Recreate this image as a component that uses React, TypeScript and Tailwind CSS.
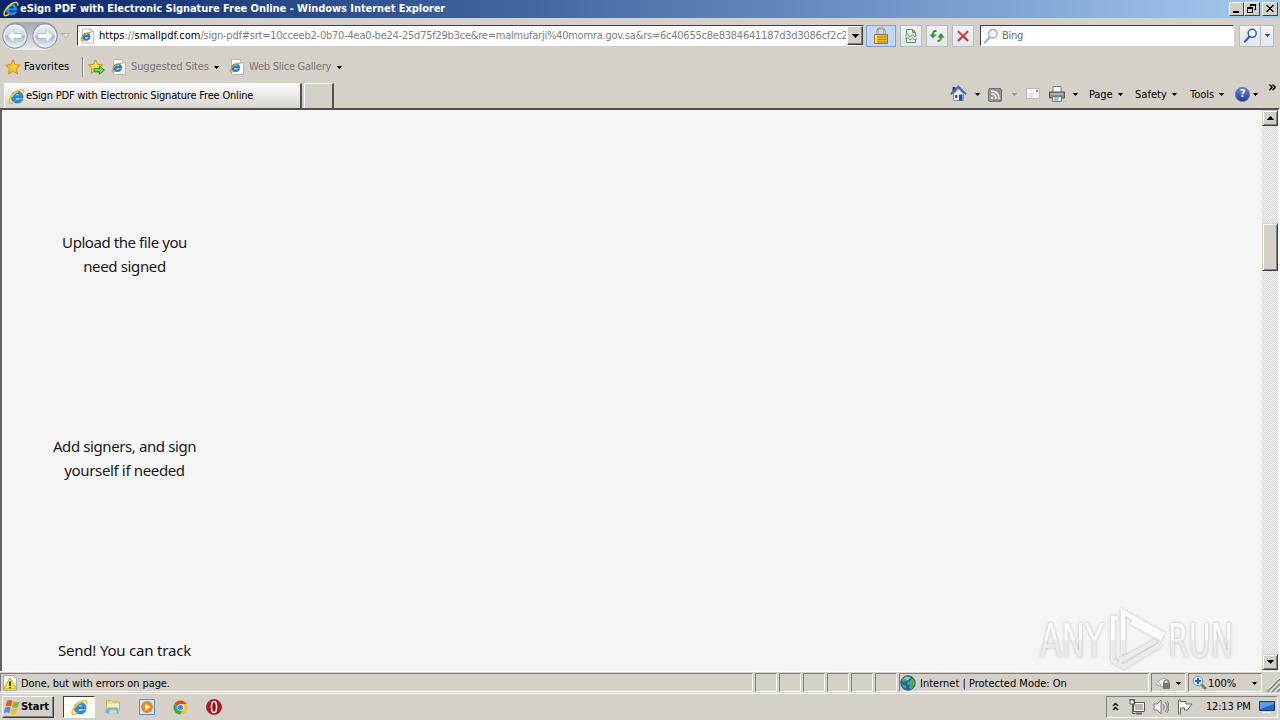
import type { ReactNode } from 'react'

const STATUS_PANES = [1, 2, 3, 4, 5, 6]

const STEPS = [
  { lines: ['Upload the file you', 'need signed'], tracking: ['tracking-[-0.43px]', 'tracking-[-0.35px]'] },
  { lines: ['Add signers, and sign', 'yourself if needed'], tracking: ['tracking-[-0.4px]', 'tracking-[-0.35px]'] },
  { lines: ['Send! You can track'], tracking: ['tracking-[-0.2px]'] },
]

function IeLogo({ className }: { className: string }) {
  return (
    <svg viewBox="0 0 16 16" className={className}>
      <path d="M14.200 9.400H6.600c.1 1.300 1 2 2.200 2 .9 0 1.600-.3 2-.9h3.200c-.8 2.200-2.700 3.700-5.300 3.700-3.300 0-5.500-2.300-5.500-5.500 0-3.200 2.400-5.700 5.700-5.700 3.400 0 5.500 2.600 5.300 6.400zM6.700 7.200h4.200c-.2-1-.9-1.600-2-1.600-1.100 0-1.900.6-2.200 1.600z" fill="#2a8ee2" stroke="#15569c" strokeWidth=".5" />
      <path d="M4.300 8C4.500 5.500 6.500 3.900 9 4" fill="none" stroke="#8fdcff" strokeWidth="1.200" />
      <path d="M14.600 4.700C15.500 1.300 13 .3 8.800 2.800 4 5.800.200 11.500 1.200 13.800c.7 1.400 3.200.6 5-.7" fill="none" stroke="#f0c02c" strokeWidth="1.600" />
    </svg>
  )
}

function IePage({ className }: { className: string }) {
  return (
    <svg viewBox="0 0 16 16" className={className}>
      <path d="M2.500.5h9l3 3v12h-12z" fill="#fff" stroke="#b5b5b5" />
      <path d="M11.500.5v3h3" fill="#ddd" stroke="#b5b5b5" />
      <path d="M10.800 9H4.600c.2 2.600 3.400 2.800 4.200 1h1.700c-1.600 4-7.900 3.200-7.900-1.200 0-5 8.400-5.300 8.200.2zM4.800 7.500h4C8.500 5.400 5.300 5.400 4.800 7.500z" fill="#2076c8" stroke="#2076c8" strokeWidth=".9" />
      <path d="M11.300 5C11 2 2 7 1.200 11.500c-.3 2.200 1.800 1.700 3.300.7" fill="none" stroke="#c9a92c" strokeWidth="1.200" />
    </svg>
  )
}

function Caret({ className = '', color = '#000' }: { className?: string; color?: string }) {
  return (
    <svg viewBox="0 0 6 3" className={`h-[3px] w-1.5 flex-shrink-0 ${className}`} shapeRendering="crispEdges">
      <path d="M0 0h6L3 3z" fill={color} />
    </svg>
  )
}

function Star({ className }: { className: string }) {
  return (
    <svg viewBox="0 0 16 16" className={className}>
      <path d="M8 .8l2.200 4.800 5.100.6-3.800 3.500 1 5.200L8 12.300l-4.500 2.600 1-5.200L.7 6.200l5.100-.6z" fill="#ffc32b" stroke="#d88713" />
      <path d="M8 3l1.400 3.400 3.300.5-3 1.600L8 8z" fill="#ffec8f" />
    </svg>
  )
}

function ArrowButton({ flip, className }: { flip?: boolean; className: string }) {
  return (
    <svg viewBox="0 0 26 26" className={className}>
      <defs>
        <linearGradient id="orb" x1="0" y1="0" x2="0" y2="1">
          <stop offset="0" stopColor="#f4f6fa" />
          <stop offset=".45" stopColor="#cdd7e4" />
          <stop offset=".5" stopColor="#a9bbd2" />
          <stop offset="1" stopColor="#eaf6ff" />
        </linearGradient>
      </defs>
      <circle cx="13" cy="13" r="12" fill="url(#orb)" stroke="#8b95a5" strokeWidth="1.300" />
      <circle cx="13" cy="13" r="10.800" fill="none" stroke="#f4f7fb" strokeWidth="1.300" />
      <g transform={flip ? 'translate(26 0) scale(-1 1)' : undefined}>
        <path d="M5.500 13L12 6.500v4h8v5h-8v4z" fill="#fff" stroke="#9fb0c6" strokeWidth=".7" />
      </g>
    </svg>
  )
}

function ToolButton({ children, className }: { children: ReactNode; className: string }) {
  return (
    <div className={`flex h-[22px] flex-shrink-0 items-center justify-center border border-[#b5bdc9] bg-gradient-to-b from-[#f3f3f3] to-[#e3e6eb] ${className}`}>
      {children}
    </div>
  )
}

function Magnifier({ className, color }: { className: string; color: string }) {
  return (
    <svg viewBox="0 0 16 16" className={className}>
      <path d="M7 9l-5 5.500" stroke={color} strokeWidth="2.200" strokeLinecap="round" />
      <circle cx="9.800" cy="5.700" r="4.300" fill="#f2f8ff" stroke={color} strokeWidth="1.500" />
    </svg>
  )
}

function TitleBar() {
  return (
    <header className="flex h-[18px] items-center bg-gradient-to-r from-[#0a246a] to-[#a6caf0] pl-[3px] pr-0.5">
      <IeLogo className="h-4 w-4" />
      <span className="ml-px w-[440px] whitespace-nowrap text-[11px] font-bold tracking-[-0.06px] text-white">
        eSign PDF with Electronic Signature Free Online - Windows Internet Explorer
      </span>
      <div className="ml-auto flex">
        {['min', 'restore', 'close'].map((kind) => (
          <div
            key={kind}
            className={`h-3.5 border border-b-[#404040] border-l-white border-r-[#404040] border-t-white bg-[#d4d0c8] ${kind === 'close' ? 'ml-0.5 w-4' : kind === 'min' ? 'w-[15px]' : 'w-4'}`}
          >
            <svg viewBox="0 0 14 12" className="h-3 w-3.5" fill="none" stroke="#000" shapeRendering="crispEdges">
              {kind === 'min' && <path d="M3 9h6" strokeWidth="2" />}
              {kind === 'restore' && <path d="M5.500 4V1.500h5v5H9M5 2h6M2.500 4.500h5v5h-5zM2 5h6" />}
              {kind === 'close' && <path d="M3 2l7 7M10 2L3 9M4 2l7 7M11 2L4 9" />}
            </svg>
          </div>
        ))}
      </div>
    </header>
  )
}

function NavBar() {
  return (
    <div className="flex h-[35px] items-center">
      <div className="ml-0.5 flex h-7 w-14 items-center justify-between rounded-full bg-gradient-to-b from-[#a5a6b0] to-[#eeeeee]">
        <ArrowButton className="h-[26px] w-[26px]" />
        <ArrowButton flip className="h-[26px] w-[26px]" />
      </div>
      <svg viewBox="0 0 9 6" className="ml-[3px] h-1.5 w-[9px]">
        <path d="M.5.500h8L4.500 5z" fill="#ddd" stroke="#aaa6a0" strokeWidth=".8" />
      </svg>

      {/* Address field */}
      <div className="ml-[7px] flex h-[21px] w-[787px] items-center border border-b-white border-l-[#404040] border-r-[#d4d0c8] border-t-[#404040] bg-white">
        <IePage className="ml-0.5 h-4 w-[15px] flex-shrink-0" />
        <div className="ml-1 mt-0.5 w-[747px] flex-shrink-0 overflow-hidden whitespace-nowrap text-[11px] text-[#808080]">
          <span>
            <span className="text-black">https</span>://<span className="text-black">smallpdf.com</span>
          </span>
          <span className="tracking-[-0.235px]">/sign-pdf#srt=10cceeb2-0b70-4ea0-be24-25d75f29b3ce&amp;re=malmufarji%40momra.gov.sa&amp;rs=6c40655c8e8384641187d3d3086cf2c2</span>
        </div>
        <div className="ml-px flex h-[19px] w-4 flex-shrink-0 items-center justify-center border border-b-[#404040] border-l-white border-r-[#404040] border-t-white bg-[#d4d0c8] shadow-[inset_-1px_-1px_#808080]">
          <svg viewBox="0 0 8 4" className="h-1 w-2" shapeRendering="crispEdges"><path d="M0 0h8L4 4z" /></svg>
        </div>
      </div>

      <div className="ml-0.5 flex h-[22px] w-[30px] items-center justify-center border border-[#7da2d6] bg-[#bfd8fb]">
        <svg viewBox="0 0 16 18" className="h-[18px] w-4">
          <path d="M4.500 9V4.500C4.500.500 11.500.500 11.500 4.500V9" fill="none" stroke="#a28a60" strokeWidth="2.200" />
          <path d="M4.500 9V4.500C4.500 1 11.500 1 11.500 4.500V9" fill="none" stroke="#e7dcc0" strokeWidth=".8" />
          <path d="M1.500 7.500h13v9h-13z" fill="#edb625" stroke="#a6731a" />
          <path d="M2 10h12M2 12.500h12M2 15h12" stroke="#bd851b" />
          <path d="M3 8v8" stroke="#ffe580" strokeWidth="2" />
        </svg>
      </div>
      <ToolButton className="ml-1 w-[22px]">
        <svg viewBox="0 0 16 16" className="h-4 w-4" fill="none" stroke="#48a34b">
          <path d="M3.500 6V1.500h6l3 3V7M9.500 1.500v3h3M3.500 10v4.500h9V11" />
          <path d="M2 8l2.500-2L7 9l2.500-2L12 9l2-1.500M2 11l2.500-2L7 12l2.500-2 2.500 2 2-1.500" />
        </svg>
      </ToolButton>
      <ToolButton className="ml-1 w-[22px]">
        <svg viewBox="0 0 16 16" className="h-4 w-4" fill="none" stroke="#2f9735" strokeWidth="2">
          <path d="M7.500 3C5 2.500 4 3.500 4 7M8.500 13c2.500 0 3.500-1 3.500-5" />
          <path d="M.5 6.500h7L4 10.500zM8.500 9.500h7L12 5z" fill="#2f9735" stroke="none" />
        </svg>
      </ToolButton>
      <ToolButton className="ml-1 w-[22px]">
        <svg viewBox="0 0 16 16" className="h-4 w-4" stroke="#c23a47" strokeWidth="2.200">
          <path d="M3 3l10 10M13 3L3 13" />
          <path d="M4 3l4 4 4-4" fill="none" stroke="#ec8a8f" strokeWidth=".8" />
        </svg>
      </ToolButton>

      <div className="ml-1.5 flex h-[21px] w-[254px] items-center border border-b-white border-l-[#404040] border-r-white border-t-[#404040] bg-white text-[11px] text-[#6d6d6d]">
        <Magnifier className="ml-0.5 h-4 w-4" color="#a0afc0" />
        <span className="ml-[3px] mt-0.5 tracking-[-0.3px]">Bing</span>
      </div>
      <ToolButton className="ml-[5px] w-[22px]">
        <Magnifier className="h-[15px] w-[15px]" color="#2759be" />
      </ToolButton>
      <ToolButton className="-ml-px w-[14px]">
        <Caret color="#2a57a5" />
      </ToolButton>
    </div>
  )
}

function FavoritesBar() {
  return (
    <div className="flex h-7 items-center text-[11px] text-[#777]">
      <Star className="ml-[5px] h-4 w-4" />
      <span className="ml-[3px] w-[58px] whitespace-nowrap tracking-[0.08px] text-black">Favorites</span>
      <div className="h-5 w-0.5 border-l border-r border-l-[#808080] border-r-white" />
      <svg viewBox="0 0 17 16" className="ml-1 h-4 w-[17px]">
        <path d="M7.500.8l2 4.500 5 .5-3.800 3.400 1 5.200-4.200-2.600-4.500 2.600 1-5.200L.5 5.800l5-.5z" fill="#ffdf45" stroke="#b89625" />
        <path d="M6 9.500h5.500V7l4.800 4.200-4.800 4v-2.500H6z" fill="#6ddc47" stroke="#239225" />
      </svg>
      <IePage className="ml-1.5 h-4 w-4" />
      <span className="ml-1 mt-px w-[82px] whitespace-nowrap tracking-[-0.15px]">Suggested Sites</span>
      <Caret />
      <IePage className="ml-2.5 h-4 w-4" />
      <span className="ml-1 mt-px w-[87px] whitespace-nowrap tracking-[-0.25px]">Web Slice Gallery</span>
      <Caret />
    </div>
  )
}

function TabRow() {
  return (
    <div className="flex h-[27px] items-end text-[11px] text-black">
      <div className="ml-1 flex h-[25px] w-[298px] items-center border-l border-r-2 border-t border-l-white border-r-[#505050] border-t-white bg-gradient-to-b from-[#fcfcfb] to-[#d9d5ce] pl-[3px]">
        <IeLogo className="h-[17px] w-[17px]" />
        <span className="ml-px mt-px whitespace-nowrap tracking-[-0.19px]">eSign PDF with Electronic Signature Free Online</span>
      </div>
      <div className="ml-0.5 h-[25px] w-[30px] border-l border-r-2 border-t border-l-white border-r-[#505050] border-t-white" />

      {/* Command bar */}
      <div className="ml-[616px] flex h-[29px] items-center">
        <svg viewBox="0 0 17 17" className="h-[17px] w-[17px]">
          <path d="M3.500 8.500v7h10v-7l-5-5z" fill="#f3f5fa" stroke="#8190b0" />
          <path d="M2.500 2h3v5h-3z" fill="#243d9b" />
          <path d="M.800 9.200l7.500-7.500 7.800 7.500" fill="none" stroke="#526ba9" strokeWidth="2" />
          <path d="M4 9l4.300-4.500L13 9" fill="none" stroke="#b5c7e8" />
          <path d="M9 9.500h3.500v6H9z" fill="#18539b" />
          <path d="M5 10h2.500v3H5z" fill="#285caf" />
        </svg>
        <Caret className="ml-[7px] mt-px" />
        <svg viewBox="0 0 14 14" className="ml-2 mt-0.5 h-3.5 w-3.5" fill="none">
          <rect x=".5" y=".5" width="13" height="13" rx="1.500" fill="#929292" stroke="#717171" />
          <circle cx="4" cy="10" r="1.300" fill="#fff" />
          <path d="M3 6c3 0 5 2 5 5M3 3c5 0 8 3 8 8" stroke="#fff" strokeWidth="1.500" />
        </svg>
        <Caret className="ml-[9px] mt-px" color="#9a9690" />
        <svg viewBox="0 0 14 11" className="ml-[9px] h-[11px] w-3.5" fill="none">
          <path d="M.5.500h13v10H.500z" fill="#f7f7f7" stroke="#b6b6b6" />
          <path d="M3 6h5M3 8h4" stroke="#c9c9cc" />
          <path d="M10 2h2v2h-2z" fill="#d26464" />
        </svg>
        <svg viewBox="0 0 16 16" className="ml-[9px] h-4 w-4">
          <path d="M4 .500h8v6H4z" fill="#fff" stroke="#777" />
          <path d="M.5 6h15v6h-15z" fill="#878b94" stroke="#555" />
          <path d="M2 8h12" stroke="#cfd3da" />
          <path d="M3.500 10.500h9v5h-9z" fill="#eaf2fa" stroke="#777" />
          <path d="M5 12h5M5 14h4" stroke="#5599bf" />
        </svg>
        <Caret className="ml-[7px] mt-px" />
        <span className="ml-[11px] mt-[3px] w-7 tracking-[-0.1px]">Page</span>
        <Caret className="mt-px" />
        <span className="ml-3 mt-[3px] w-9 tracking-[0.05px]">Safety</span>
        <Caret className="mt-px" />
        <span className="ml-[13px] mt-[3px] w-7">Tools</span>
        <Caret className="mt-px" />
        <div className="ml-[11px] mt-px flex h-[15px] w-[15px] items-center justify-center rounded-full border border-[#626e99] bg-gradient-to-b from-[#6888d8] to-[#173f9f] text-[11px] font-bold text-white">?</div>
        <Caret className="ml-0.5 mt-px" />
        <span className="mb-3 ml-2.5 text-[15px] font-bold leading-none tracking-tight">»</span>
      </div>
    </div>
  )
}

function ScrollButton({ up }: { up?: boolean }) {
  return (
    <div className="flex h-4 w-4 items-center justify-center border border-b-[#404040] border-l-[#d4d0c8] border-r-[#404040] border-t-[#d4d0c8] bg-[#d4d0c8] shadow-[inset_1px_1px_#fff,inset_-1px_-1px_#808080]">
      <svg viewBox="0 0 8 4" className="h-1 w-2" shapeRendering="crispEdges">
        <path d={up ? 'M0 4h8L4 0z' : 'M0 0h8L4 4z'} />
      </svg>
    </div>
  )
}

function Watermark() {
  return (
    <div className="absolute bottom-0 right-[38px] h-[64px] w-[204px]">
      <svg viewBox="0 0 204 64" className="h-16 w-[204px] [filter:drop-shadow(0_0_1.5px_#bbb)]">
        <defs>
          <linearGradient id="mark" gradientUnits="userSpaceOnUse" x1="0" y1="0" x2="0" y2="64">
            <stop offset=".5" stopColor="#fcfcfc" />
            <stop offset=".53" stopColor="#ebebeb" />
          </linearGradient>
        </defs>
        <g fill="url(#mark)" className="text-[46px] [font-family:'Liberation_Sans_Narrow','DejaVu_Sans_Condensed',sans-serif]">
          <text x="4" y="50" textLength="64" lengthAdjust="spacingAndGlyphs">ANY</text>
          <text x="132" y="50" textLength="65" lengthAdjust="spacingAndGlyphs">RUN</text>
        </g>
        <path d="M87 47V5l39 22-2 4-29-16" fill="none" stroke="url(#mark)" strokeWidth="4.500" />
        <path d="M82 11h-5v43l11 6 37-23M83 54l37-20" fill="none" stroke="url(#mark)" strokeWidth="4.500" />
      </svg>
    </div>
  )
}

function PageView() {
  return (
    <main className="relative flex h-[563px] border-l-2 border-r-2 border-t-2 border-l-[#606060] border-r-white border-t-[#505050] bg-[#f5f5f5]">
      <div className="h-full flex-1 overflow-hidden pl-[22px] pt-[120px]">
        {STEPS.map((step) => (
          <div key={step.lines[0]} className="h-[204px] w-[201px] text-center text-[15px] leading-6 text-[#181818] [font-family:'Noto_Sans',sans-serif]">
            {step.lines.map((line, i) => (
              <p key={line} className={`whitespace-nowrap ${step.tracking[i]}`}>{line}</p>
            ))}
          </div>
        ))}
      </div>
      <div className="flex h-[561px] w-4 flex-col bg-[#e9e7e3] bg-[repeating-conic-gradient(#fff_0_25%,#d4d0c8_0_50%)] bg-[length:2px_2px]">
        <ScrollButton up />
        <div className="mt-[97px] h-12 w-4 border border-b-[#404040] border-l-[#d4d0c8] border-r-[#404040] border-t-[#d4d0c8] bg-[#d4d0c8] shadow-[inset_1px_1px_#fff,inset_-1px_-1px_#808080]" />
        <div className="mb-px mt-auto"><ScrollButton /></div>
      </div>
      <Watermark />
    </main>
  )
}

function StatusBar() {
  const pane = 'h-[19px] flex-shrink-0 border border-b-white border-l-[#808080] border-r-white border-t-[#808080]'

  return (
    <div className="flex h-[22px] items-center gap-0.5 border-t border-t-white text-[11px] text-black">
      <div className={`${pane} flex w-[753px] items-center`}>
        <svg viewBox="0 0 16 16" className="ml-px h-4 w-4">
          <path d="M1.500.500h10l3 3v12h-13z" fill="#fff" stroke="#aaa" />
          <path d="M8 3l6.500 11h-13z" fill="#ffe62e" stroke="#c6a51e" />
          <path d="M8 6.500V11M8 12v1.300" stroke="#000" strokeWidth="1.500" />
        </svg>
        <span className="ml-[3px] mt-[3px] tracking-[-0.09px]">Done, but with errors on page.</span>
      </div>
      {STATUS_PANES.map((n) => <div key={n} className={`${pane} w-[22px]`} />)}
      <div className={`${pane} flex w-[250px] items-center`}>
        <svg viewBox="0 0 16 16" className="h-4 w-4">
          <circle cx="8" cy="8" r="7.300" fill="#2363b3" stroke="#234777" strokeWidth=".7" />
          <path d="M2 4l4-3 3 1-1 3-4 2-2-1zM8 7l5-4 2 5-3 6-3-1 1-3-3-1zM2 9l4 2v3L3 12z" fill="#4fae4b" />
          <path d="M4 4c2-3 6-2 7-1L8 5z" fill="#b8e3f3" opacity=".7" />
        </svg>
        <span className="ml-1 mt-[3px]">Internet | Protected Mode: On</span>
      </div>
      <div className={`${pane} flex w-[35px] items-center`}>
        <svg viewBox="0 0 16 16" className="ml-[3px] h-4 w-4">
          <path d="M1 10c2-5 6-6 9-7l3 3-5 6zM4 8l3 4" fill="#f5f5f5" stroke="#a0a0a0" />
          <path d="M9 8c0-4 5-4 5 0" fill="none" stroke="#888" strokeWidth="1.500" />
          <path d="M8 8h7v6H8z" fill="#777" />
        </svg>
        <Caret className="ml-1 mt-0.5" />
      </div>
      <div className={`${pane} flex w-[74px] items-center`}>
        <svg viewBox="0 0 16 16" className="ml-[3px] h-4 w-4">
          <path d="M8 8l6 6" stroke="#92714c" strokeWidth="2.500" />
          <circle cx="6" cy="6" r="4.800" fill="#e8f3ff" stroke="#688fc0" />
          <path d="M6 3v6M3 6h6" stroke="#1765ce" strokeWidth="2" />
        </svg>
        <span className="mt-[3px] w-[43px] tracking-[-0.05px]">100%</span>
        <Caret className="mt-0.5" />
      </div>
      <svg viewBox="0 0 13 13" className="ml-auto mt-1.5 h-[13px] w-[13px]">
        <path d="M0 13L13 0M5 13l8-8M10 13l3-3" stroke="#808080" strokeWidth="1.500" />
        <path d="M-1 12L12-1M4 12l9-9M9 12l4-4" stroke="#fff" />
      </svg>
    </div>
  )
}

function Taskbar() {
  return (
    <footer className="flex h-[27px] items-center border-t border-t-white bg-[#d5d0c8] text-[11px] text-black">
      <div className="ml-0.5 flex h-[22px] w-[52px] items-center border border-b-[#404040] border-l-white border-r-[#404040] border-t-white shadow-[inset_-1px_-1px_#808080]">
        <svg viewBox="0 0 17 16" className="ml-px h-4 w-[17px]">
          <path d="M3 2c2-1.500 4-1 5.500 0L7 7.500C5.500 6.500 4 6.500 1.500 7.500z" fill="#e75b2a" />
          <path d="M9.500 2.500c2 1 4 1 6 0L14 8c-2 1-4 1-6 0z" fill="#80b93c" />
          <path d="M1.200 8.700c2-1.200 3.800-1 5.500 0L5.200 14C3.800 13 2 13-.2 14z" fill="#4a92d6" />
          <path d="M7.700 9.200c2 1 4 1 6 0l-1.500 5.300c-2 1-4 1-6 0z" fill="#f8bd2d" />
        </svg>
        <span className="mt-px font-bold tracking-[-0.05px]">Start</span>
      </div>
      <div className="ml-[9px] flex h-[22px] w-8 items-center justify-center border border-b-white border-l-[#404040] border-r-white border-t-[#404040] bg-white">
        <IeLogo className="h-[17px] w-[17px]" />
      </div>
      <svg viewBox="0 0 16 16" className="ml-[10px] h-4 w-4">
        <path d="M1.500 3V1.500h5L8 3h6.500v8h-13z" fill="#f2dc83" stroke="#d0b65d" />
        <path d="M2 5h12v5H2z" fill="#fff0ad" />
        <path d="M3.500 15V9.500h9V15M1.500 10v4" fill="none" stroke="#65b9e2" strokeWidth="2" />
      </svg>
      <svg viewBox="0 0 16 16" className="ml-[18px] h-4 w-4">
        <path d="M.500.500h15v15H.500z" fill="#cce6fb" stroke="#4f94ce" />
        <circle cx="8" cy="8" r="6" fill="#ee861c" />
        <path d="M6 4.500l5.500 3.500L6 11.500z" fill="#fff" />
      </svg>
      <svg viewBox="0 0 16 16" className="ml-[18px] h-[15px] w-[15px]">
        <circle cx="8" cy="8" r="7.500" fill="#f2c72e" />
        <path d="M8 8L1.500 4.300A7.500 7.500 0 0 1 14.500 4.300H8z" fill="#dc4736" />
        <path d="M8 8L1.500 4.300A7.500 7.500 0 0 0 7.500 15.500L11 9.500z" fill="#36a852" />
        <circle cx="8" cy="8" r="3.600" fill="#fff" />
        <circle cx="8" cy="8" r="2.800" fill="#4285f4" />
      </svg>
      <svg viewBox="0 0 16 16" className="ml-[18px] h-4 w-4">
        <circle cx="8" cy="8" r="7.600" fill="#b91420" stroke="#77131b" strokeWidth=".6" />
        <ellipse cx="8" cy="8" rx="2.500" ry="5.600" fill="#8c1018" stroke="#fff" strokeWidth="1.500" />
      </svg>

      {/* Notification area */}
      <div className="ml-auto mr-0.5 flex h-[22px] w-[172px] items-center border border-b-white border-l-[#808080] border-r-white border-t-[#808080]">
        <svg viewBox="0 0 7 9" className="mb-0.5 ml-[5px] h-[9px] w-[7px]" fill="none" stroke="#000" strokeWidth="1.400">
          <path d="M1 4l2.500-2.500L6 4M1 8l2.500-2.500L6 8" />
        </svg>
        <svg viewBox="0 0 16 16" className="ml-2.5 h-4 w-4">
          <path d="M4.500 3.500h11v9h-11z" fill="#b7b8b8" stroke="#555" />
          <path d="M5.500 4.500h9v7h-9z" fill="none" stroke="#fff" />
          <path d="M7 14.500h6" stroke="#666" strokeWidth="2" />
          <path d="M.500.500h5v5h-2v9h3" fill="none" stroke="#555" />
          <path d="M1 1h4v4H1z" fill="#fff" stroke="#555" />
        </svg>
        <svg viewBox="0 0 16 16" className="ml-2 h-4 w-4" fill="none" stroke="#777">
          <path d="M1 5h3l4-4v14l-4-4H1z" fill="#fff" />
          <path d="M10 5c1.500 2 1.500 4 0 6M12 3c3 3 3 7 0 10M14 2c2.500 4 2.500 8 0 12" />
        </svg>
        <svg viewBox="0 0 16 16" className="ml-2 h-4 w-4">
          <path d="M1.500 1v14h2V9h4l0 2h3l4.500-6H9V2.500H3.500V1z" fill="#fff" stroke="#666" />
        </svg>
        <span className="ml-[13px] mt-px w-[54px] whitespace-nowrap tracking-[-0.2px]">12:13 PM</span>
        <svg viewBox="0 0 16 14" className="-ml-px h-3.5 w-4">
          <path d="M.5 1.500h15v9H.5z" fill="#2467bd" stroke="#123c7c" />
          <path d="M1 2h14v2L1 9z" fill="#5b9ae2" />
          <path d="M4 12.500h8" stroke="#eee" />
        </svg>
      </div>
    </footer>
  )
}

export default function App() {
  return (
    <div className="h-[720px] w-[1280px] overflow-hidden bg-[#d5d0c8] [font-family:'DejaVu_Sans_Condensed','DejaVu_Sans',sans-serif] [font-stretch:condensed]">
      <TitleBar />
      <NavBar />
      <FavoritesBar />
      <TabRow />
      <PageView />
      <StatusBar />
      <Taskbar />
    </div>
  )
}
